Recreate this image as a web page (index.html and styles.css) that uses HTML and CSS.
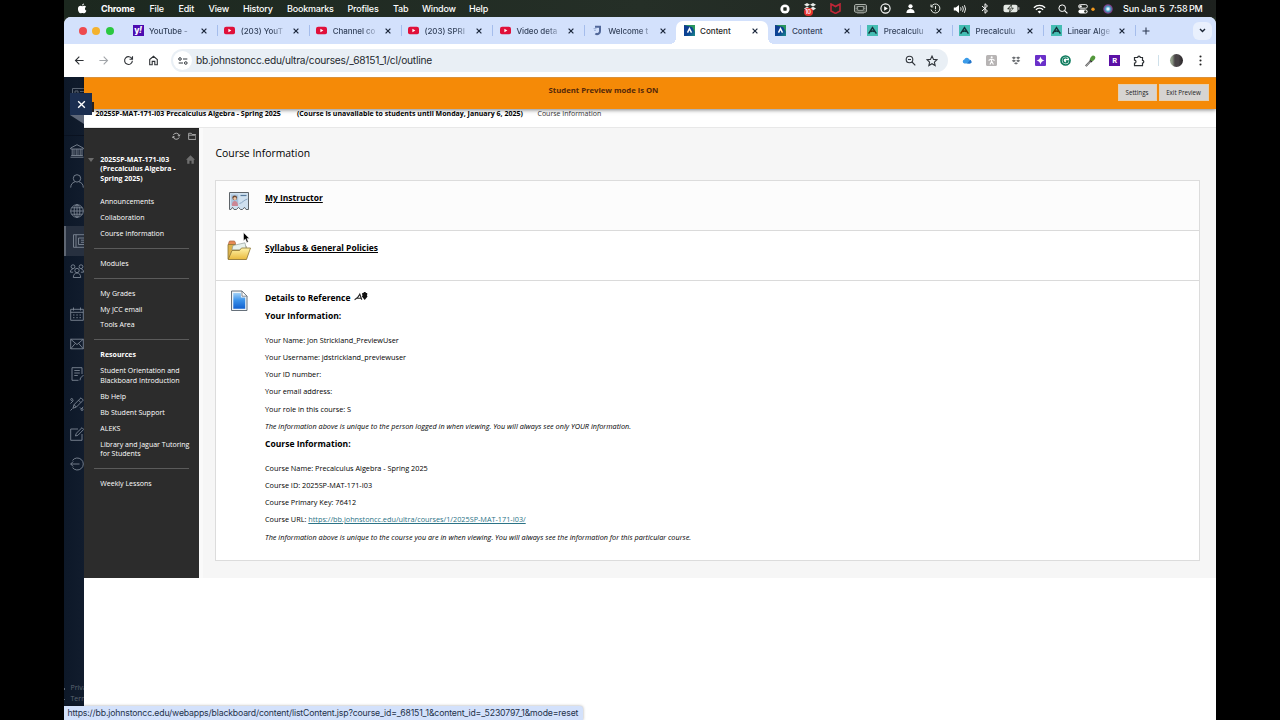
FILE: index.html
```
<!DOCTYPE html>
<html lang="en">
<head>
  <meta charset="UTF-8">
  <meta name="viewport" content="width=device-width, initial-scale=1.0">
  <title>Content</title>
  <link rel="stylesheet" href="styles.css">
</head>
<body>

<!-- shared icons -->
<svg class="sprite" aria-hidden="true">
  <defs>
    <linearGradient id="bbGrad" x1="0" y1="0" x2="1" y2="1">
      <stop offset="0" stop-color="#10398f"/><stop offset=".6" stop-color="#0b4595"/><stop offset="1" stop-color="#1d8f86"/>
    </linearGradient>
    <linearGradient id="folderGrad" x1="0" y1="0" x2="0" y2="1">
      <stop offset="0" stop-color="#fff3a8"/><stop offset="1" stop-color="#e9b93c"/>
    </linearGradient>
    <linearGradient id="docGrad" x1="0" y1="0" x2="0" y2="1">
      <stop offset="0" stop-color="#9fd0f7"/><stop offset=".45" stop-color="#3c93ea"/><stop offset="1" stop-color="#1160cf"/>
    </linearGradient>
    <symbol id="yt" viewBox="0 0 12 12"><rect y="1.8" width="12" height="8.4" rx="2.4" fill="#e0103a"/><path d="M4.8 4.2v3.6L8 6z" fill="#fff"/></symbol>
    <symbol id="bb" viewBox="0 0 11 11"><rect width="11" height="11" fill="url(#bbGrad)"/><path d="M0 0h11v7L8 2z" fill="#35b34a" opacity=".75"/><path d="M3.5 7.600L5.500 3.600l2 4" fill="none" stroke="#fff" stroke-width="1.400"/></symbol>
    <symbol id="aleks" viewBox="0 0 11 11"><rect width="11" height="11" fill="#45bdb3"/><path d="M1.600 8.600L5.500 2.600l3.900 6M3.400 6.800c1.200-.9 3-.9 4.200 0" fill="none" stroke="#12343b" stroke-width="1.400"/></symbol>
    <symbol id="x" viewBox="0 0 8 8"><path d="M1.600 1.600l4.800 4.800M6.400 1.600L1.600 6.400" fill="none" stroke="currentColor" stroke-width="1.250"/></symbol>
  </defs>
</svg>

<div class="screen">

  <div class="menubar">
    <svg class="apple" viewBox="0 0 12 14"><path d="M8.500.6c.1 1.300-1.100 2.600-2.400 2.600C5.900 1.900 7.200.8 8.500.6zM6.200 4c.6 0 1.300-.6 2.500-.6 1 0 1.900.5 2.500 1.300-2.200 1.300-1.800 4.400.4 5.200-.5 1.300-1.700 3.300-2.900 3.300-.9 0-1.200-.5-2.300-.5s-1.500.5-2.300.5C2.600 13.200.8 10.200.8 7.600c0-2.600 1.700-4.100 3.300-4.100 1 0 1.600.5 2.100.5z" fill="#fff"/></svg>
    <b class="m-app">Chrome</b>
    <span class="m-file">File</span>
    <span class="m-edit">Edit</span>
    <span class="m-view">View</span>
    <span class="m-history">History</span>
    <span class="m-book">Bookmarks</span>
    <span class="m-prof">Profiles</span>
    <span class="m-tab">Tab</span>
    <span class="m-win">Window</span>
    <span>Help</span>
    <div class="status">
      <i><svg width="10" height="10" viewBox="0 0 10 10"><circle cx="5" cy="5" r="4.600" fill="#fff"/><rect x="3.300" y="3.300" width="3.400" height="3.400" rx=".6" fill="#20281f"/></svg></i>
      <i class="dbx"><svg width="14" height="12" viewBox="0 0 14 12"><path d="M4 0l3 1.800L4 3.600 1 1.800zM10 0l3 1.800-3 1.800-3-1.800zM4 3.800l3 1.800-3 1.800-3-1.800zM10 3.800l3 1.800-3 1.800-3-1.800zM7 7.600l3 1.500L7 10.600 4 9.100z" fill="#e8ebe8"/></svg><em>10</em></i>
      <i><svg width="11" height="11" viewBox="0 0 11 11"><path d="M1 1l4.500 2.500L10 1v7L5.500 10.400 1 8z" fill="none" stroke="#c02637" stroke-width="1.600"/></svg></i>
      <i><svg width="13" height="10" viewBox="0 0 13 10"><rect x=".6" y=".6" width="11.800" height="7.600" rx="1.200" fill="none" stroke="#b9beb9" stroke-width="1"/><path d="M2.200 2.500v4M10.800 2.500v4" stroke="#b9beb9" stroke-dasharray="1 .6"/><rect x="3.700" y="2.500" width="5.600" height="3.800" fill="none" stroke="#b9beb9" stroke-width=".8"/><path d="M3 9.600h7" stroke="#777" stroke-width=".7"/></svg></i>
      <i><svg width="11" height="11" viewBox="0 0 11 11"><circle cx="5.500" cy="5.500" r="4.600" fill="none" stroke="#fff" stroke-width="1.100"/><path d="M4.200 3.300v4.400l3.600-2.200z" fill="#fff"/></svg></i>
      <i><svg width="9" height="9" viewBox="0 0 9 9"><circle cx="4.500" cy="2.300" r="2.100" fill="#fff"/><path d="M.4 9c0-2.600 1.600-4 4.100-4s4.100 1.400 4.100 4z" fill="#fff"/></svg></i>
      <i><svg width="11" height="11" viewBox="0 0 11 11"><path d="M1.300 3.600A4.500 4.500 0 1 1 1 6.500M1 1.500v2.400h2.400M5.500 3v3.200M5.500 7.200v1" fill="none" stroke="#e4e8e4" stroke-width="1"/></svg></i>
      <i><svg width="14" height="10" viewBox="0 0 14 10"><path d="M.8 3.400h2L6 .9v8.200L2.800 6.600h-2z" fill="#fff"/><path d="M7.600 3.300q1 1.700 0 3.400M9.500 2.200q1.700 2.800 0 5.600M11.400 1.200q2.300 3.800 0 7.600" fill="none" stroke="#fff" stroke-width=".9"/></svg></i>
      <i><svg width="8" height="11" viewBox="0 0 8 11"><path d="M1 3l5.500 5L4 10.300V.7L6.500 3 1 8" fill="none" stroke="#fff" stroke-width="1"/></svg></i>
      <i class="w28"><svg width="17" height="9" viewBox="0 0 17 9"><rect x=".5" y=".8" width="14" height="7.400" rx="2" fill="#e4e8e4"/><rect x="15.200" y="3.200" width="1.200" height="2.600" fill="#aaa"/><path d="M8.700.4L4.600 5h2.600l-.9 3.600L10.400 4H7.800z" fill="#20281f" stroke="#20281f" stroke-width=".6"/><path d="M8.200 1.800L5.800 4.500h2l-.6 2.700 2.400-2.700h-2z" fill="#fff"/></svg></i>
      <i class="w27"><svg width="13" height="10" viewBox="0 0 13 10"><path d="M.9 3.700a8 8 0 0 1 11.200 0M2.900 5.700a5.200 5.200 0 0 1 7.200 0" fill="none" stroke="#fff" stroke-width="1.400"/><path d="M4.700 7.500a2.600 2.600 0 0 1 3.600 0L6.500 9.400z" fill="#fff"/></svg></i>
      <i class="w21"><svg width="10" height="10" viewBox="0 0 10 10"><circle cx="4.200" cy="4.200" r="3.300" fill="none" stroke="#fff" stroke-width="1"/><path d="M6.600 6.600l2.800 2.800" stroke="#fff" stroke-width="1.100"/></svg></i>
      <i class="w26"><svg width="18" height="10" viewBox="0 0 18 10"><rect x=".6" y=".6" width="8.800" height="3.600" rx="1.800" fill="none" stroke="#fff" stroke-width=".9"/><circle cx="2.600" cy="2.400" r="1.200" fill="#fff"/><rect x=".4" y="5.400" width="9.200" height="4.200" rx="2.100" fill="#fff"/><circle cx="7.400" cy="7.500" r="1.200" fill="#20281f"/><circle cx="15" cy="5.200" r="1.700" fill="#f39a1e"/></svg></i>
      <i class="siri"></i>
      <span class="clock">Sun Jan 5&nbsp; 7:58&thinsp;PM</span>
    </div>
  </div>

  <div class="browser">
    <div class="tabs">
      <div class="lights"><i class="r"></i><i class="y"></i><i class="g"></i></div>
      <div class="tab"><span class="yahoo">y<em>!</em></span><span class="label fade">YouTube -</span><svg class="close"><use href="#x"/></svg></div>
      <div class="tab"><svg class="fav"><use href="#yt"/></svg><span class="label fade">(203) YouT</span><svg class="close"><use href="#x"/></svg></div>
      <div class="tab"><svg class="fav"><use href="#yt"/></svg><span class="label fade">Channel co</span><svg class="close"><use href="#x"/></svg></div>
      <div class="tab"><svg class="fav"><use href="#yt"/></svg><span class="label fade">(203) SPRI</span><svg class="close"><use href="#x"/></svg></div>
      <div class="tab"><svg class="fav"><use href="#yt"/></svg><span class="label fade">Video deta</span><svg class="close"><use href="#x"/></svg></div>
      <div class="tab plain"><svg class="fav" viewBox="0 0 11 11"><path d="M3 1.800h5v4.200a2.800 2.800 0 0 1-4.600 2.400" fill="none" stroke="#52689a" stroke-width="2"/><path d="M1.500 3.600h3M2 5.300h2" stroke="#9cb0d8" stroke-width="1"/></svg><span class="label fade">Welcome t</span><svg class="close"><use href="#x"/></svg></div>
      <div class="tab active"><svg class="fav"><use href="#bb"/></svg><span class="label">Content</span><svg class="close"><use href="#x"/></svg></div>
      <div class="tab"><svg class="fav"><use href="#bb"/></svg><span class="label">Content</span><svg class="close"><use href="#x"/></svg></div>
      <div class="tab"><svg class="fav"><use href="#aleks"/></svg><span class="label fade">Precalculu</span><svg class="close"><use href="#x"/></svg></div>
      <div class="tab"><svg class="fav"><use href="#aleks"/></svg><span class="label fade">Precalculu</span><svg class="close"><use href="#x"/></svg></div>
      <div class="tab"><svg class="fav"><use href="#aleks"/></svg><span class="label fade">Linear Alge</span><svg class="close"><use href="#x"/></svg></div>
      <svg class="plus" viewBox="0 0 8 8"><path d="M4 .5v7M.5 4h7" stroke="#2c3950" stroke-width="1.100"/></svg>
      <div class="tabsearch"><svg width="7" height="5" viewBox="0 0 7 5"><path d="M1 1l2.500 2.500L6 1" fill="none" stroke="#1c2636" stroke-width="1.400"/></svg></div>
    </div>

    <div class="toolbar">
      <div class="nav">
        <svg viewBox="0 0 11 11"><path d="M9.600 5.500H1.700M5.300 1.700L1.500 5.500l3.800 3.800" fill="none" stroke="#2f3236" stroke-width="1.100"/></svg>
        <svg viewBox="0 0 11 11"><path d="M1.400 5.500h7.900M5.700 1.700l3.800 3.800-3.800 3.800" fill="none" stroke="#a3a6aa" stroke-width="1.100"/></svg>
        <svg viewBox="0 0 11 11"><path d="M9 3.800A3.900 3.900 0 1 0 9.400 5.800M9.500 1.200v3H6.500" fill="none" stroke="#2f3236" stroke-width="1.100"/></svg>
        <svg viewBox="0 0 11 11"><path d="M1.700 4.500L5.500 1.300l3.800 3.200v5.200H6.800V6.400H4.200v3.300H1.700z" fill="none" stroke="#2f3236" stroke-width="1.100"/></svg>
      </div>
      <div class="omnibox">
        <div class="tune"><svg width="10" height="8" viewBox="0 0 10 8"><circle cx="2" cy="2" r="1.300" fill="none" stroke="#33383e"/><path d="M5 2h4.300M.7 6H5" stroke="#33383e" stroke-width="1.100"/><circle cx="7.800" cy="6" r="1.300" fill="none" stroke="#33383e"/></svg></div>
        <span class="url">bb.johnstoncc.edu/ultra/courses/_68151_1/cl/outline</span>
        <svg class="zoomicon" viewBox="0 0 11 11"><circle cx="4.500" cy="4.500" r="3.300" fill="none" stroke="#30353b" stroke-width="1.100"/><path d="M7 7l3.300 3.300M3 4.500h3" stroke="#30353b" stroke-width="1.200"/></svg>
        <svg class="star" viewBox="0 0 11 11"><path d="M5.500 1l1.400 3 3.200.3-2.400 2.200.7 3.200-2.900-1.700-2.900 1.700.7-3.200L.9 4.300 4.100 4z" fill="none" stroke="#30353b" stroke-width="1"/></svg>
      </div>
      <div class="exts">
        <i><svg width="10" height="7" viewBox="0 0 10 7"><path d="M2.300 6.500a2 2 0 0 1 0-3.900 2.700 2.700 0 0 1 5-.2 2.100 2.100 0 0 1 .5 4.100z" fill="#3b9be8"/><path d="M5 6.500L8.300 3q1.500 1 1.200 2.200-.4 1.300-1.700 1.300z" fill="#2373c8"/></svg></i>
        <i><svg width="11" height="11" viewBox="0 0 11 11"><rect width="11" height="11" rx="1.500" fill="#b7b4b4"/><circle cx="5.700" cy="2.300" r="1" fill="#fff"/><path d="M2.600 5.500l2-1.200h2l2 1.200M5.500 4.300v2.200L3.900 9.500M5.900 6.500l1.500 3" fill="none" stroke="#fff" stroke-width="1.100"/></svg></i>
        <i><svg width="10" height="9" viewBox="0 0 14 11"><path d="M4 0l3 1.800L4 3.600 1 1.800zM10 0l3 1.800-3 1.800-3-1.800zM4 4.200l3 1.800-3 1.800L1 6zM10 4.200L13 6l-3 1.800L7 6zM7 8l3 1.500L7 11 4 9.500z" fill="#6b6e72"/></svg></i>
        <i><svg width="11" height="11" viewBox="0 0 11 11"><rect width="11" height="11" rx="1" fill="#6a30c9"/><path d="M5.500 1.500q.7 3.300 4 4-3.300.7-4 4-.7-3.300-4-4 3.300-.7 4-4z" fill="#fff"/></svg></i>
        <i><svg width="11" height="11" viewBox="0 0 11 11"><circle cx="5.500" cy="5.500" r="4.500" fill="#fff" stroke="#0b7a5c" stroke-width="1.700"/><path d="M7.400 3.700a2.500 2.500 0 1 0 .6 2.300H5.900" fill="none" stroke="#0b7a5c" stroke-width="1.400"/></svg></i>
        <i><svg width="11" height="12" viewBox="0 0 11 12"><path d="M.8 11.200L5.700 5.800" stroke="#555" stroke-width="2"/><path d="M1.200 10.800L5 6.500" stroke="#ddd" stroke-width=".7"/><path d="M5 4.500l2 2.400" stroke="#333" stroke-width="1.500"/><ellipse cx="7.700" cy="3.300" rx="2.200" ry="2.900" transform="rotate(40 7.700 3.300)" fill="#54983c"/></svg></i>
        <i><span class="rbox">R</span></i>
        <i><svg width="12" height="12" viewBox="0 0 12 12"><path d="M1.500 2.500h3.200a1.300 1.300 0 0 1 2.600 0h2.200v2.900a1.300 1.300 0 0 1 0 2.600v2.600h-8V8.200a1.500 1.500 0 0 0 0-3z" fill="none" stroke="#2c3034" stroke-width="1.200"/></svg></i>
        <b class="sep"></b>
        <b class="avatar"></b>
        <svg class="dots" viewBox="0 0 3 11"><circle cx="1.500" cy="1.500" r="1.050"/><circle cx="1.500" cy="5.500" r="1.050"/><circle cx="1.500" cy="9.500" r="1.050"/></svg>
      </div>
    </div>
  </div>

  <div class="viewport">
    <div class="rail">
      <div class="rail-top"><svg viewBox="0 0 14 12"><path d="M.5 11.500V1.500h13v10M3 4h3v3H3zM8 4.500h4M8 6.500h4" fill="none" stroke="#5a6472"/></svg></div>
      <div class="rail-group">
        <i><svg viewBox="0 0 14 14"><path d="M7 .7L13.300 4v1H.7V4zM.5 13.200h13M1.200 11.500h11.600M2.200 5v6.500M4 5v6.500M6.200 5v6.500M8 5v6.500M10.200 5v6.500M12 5v6.500"/></svg></i>
        <i><svg viewBox="0 0 14 14"><circle cx="7" cy="4.400" r="3.700"/><path d="M.7 13.600c.2-3.500 1.700-5 4-5.500M13.300 13.600c-.2-3.500-1.700-5-4-5.500"/></svg></i>
        <i><svg viewBox="0 0 14 14"><circle cx="7" cy="7" r="6.300"/><ellipse cx="7" cy="7" rx="2.900" ry="6.300"/><path d="M7 .7v12.600M.7 7h12.600M1.600 3.800h10.800M1.600 10.200h10.800"/></svg></i>
        <i class="on"><svg viewBox="0 0 14 14"><path d="M1.500.7H14M1.500.7v12.600H14M4 .7v12.600M6.500 4H14M6.500 4v6.500H14M9 6.200h5M9 8.300h5"/></svg></i>
        <i><svg viewBox="0 0 14 14"><circle cx="3" cy="2.700" r="1.900"/><circle cx="11" cy="2.700" r="1.900"/><circle cx="7" cy="6.500" r="2.200"/><path d="M.5 8.200c0-2 .8-3 2.500-3.400M13.500 8.200c0-2-.8-3-2.500-3.400M3.300 13.500c.1-2.800 1.400-4.500 3.700-4.500s3.600 1.700 3.700 4.500zM.5 8.200h2.700M10.800 8.200h2.700"/></svg></i>
      </div>
      <div class="rail-group second">
        <i><svg viewBox="0 0 14 14"><path d="M.7 2.300h12.600v11H.7zM.7 5.300h12.600M3.500.5v3M10.500.5v3M3 8h1.500M6.300 8h1.500M9.500 8H11M3 10.700h1.500M6.300 10.700h1.500M9.500 10.700H11"/></svg></i>
        <i><svg viewBox="0 0 14 14"><path d="M.7 2.200h12.600v9.600H.7zM.7 2.200L7 7.600l6.300-5.400M.7 11.800l4.700-5.500M13.300 11.800L8.600 6.300"/></svg></i>
        <i><svg viewBox="0 0 14 14"><path d="M12 7V.7H2v12.600h6.500M4.300 3.500h5.500M4.300 6h5.500M4.300 8.500h3.500M10 13.300l.5-2.300 3-3"/></svg></i>
        <i><svg viewBox="0 0 14 14"><path d="M3 11.200l1-3.500L11 .8l2.300 2.300-7 7zM4 7.700l2.300 2.400M8.500 3.200l2.400 2.400M10 10.500l1.300 1.300 2-2"/><circle cx="1.700" cy="2.500" r="1"/><circle cx="12" cy="12.500" r="1"/><path d="M.5 6.500L3.500 3.500M.5 13.500l2-2"/></svg></i>
        <i><svg viewBox="0 0 14 14"><path d="M8 2H.7v11.300H12V7M5.500 9l.6-2.500L12 .7l1.700 1.700L7.900 8.300z"/></svg></i>
        <i><svg viewBox="0 0 14 14"><path d="M2.500 3.400a6 6 0 1 1 0 7.200M9.500 7H.7M3.200 4.500L.7 7l2.500 2.500"/></svg></i>
      </div>
      <ul class="rail-foot"><li>Priva</li><li>Term</li></ul>
    </div>

    <div class="page">
      <div class="preview">
        <p>Student Preview mode is ON</p>
        <div class="preview-actions"><button>Settings</button><button>Exit Preview</button></div>
      </div>
      <div class="crumbs">
        <b class="c-course">2025SP-MAT-171-I03 Precalculus Algebra - Spring 2025</b>
        <b class="c-note">(Course is unavailable to students until Monday, January 6, 2025)</b>
        <span>Course Information</span>
      </div>

      <div class="course">
        <div class="menu">
          <div class="menu-tools">
            <svg viewBox="0 0 8 8"><path d="M1.200 2.900A3 3 0 0 1 6.900 3.600M6.800 5.100A3 3 0 0 1 1.100 4.400M7.500 2.400L6.900 3.900 5.400 3.300M.5 5.600l.6-1.500 1.500.6" fill="none" stroke="#b5b5b5" stroke-width=".9"/></svg>
            <svg viewBox="0 0 8 8"><path d="M.6 7V1.200h2.500l.8 1.200h3.500V7zM.6 3h6" fill="none" stroke="#a9a9a9" stroke-width=".9"/></svg>
          </div>
          <div class="menu-title">
            <svg class="caret" viewBox="0 0 6 4"><path d="M0 0h6L3 4z" fill="#6d6d6d"/></svg>
            <h3>2025SP-MAT-171-I03 (Precalculus Algebra - Spring 2025)</h3>
            <svg class="home" viewBox="0 0 9 9"><path d="M4.500.3L9 4.700H7.800v4H5.500v-3h-2v3H1.200v-4H0z" fill="#6f6f6f"/></svg>
          </div>
          <ul>
            <li>Announcements</li>
            <li>Collaboration</li>
            <li>Course Information</li>
            <li class="line"></li>
            <li>Modules</li>
            <li class="line"></li>
            <li>My Grades</li>
            <li>My JCC email</li>
            <li>Tools Area</li>
            <li class="line"></li>
            <li><b>Resources</b></li>
            <li>Student Orientation and Blackboard Introduction</li>
            <li>Bb Help</li>
            <li>Bb Student Support</li>
            <li>ALEKS</li>
            <li>Library and Jaguar Tutoring for Students</li>
            <li class="line"></li>
            <li>Weekly Lessons</li>
          </ul>
        </div>

        <div class="content">
          <h1>Course Information</h1>
          <div class="items">
            <div class="item">
              <svg class="item-icon" viewBox="0 0 24 24"><path d="M2.500 3.500h19v17h-2.500l-1.500-2.200-2 2.200h-2l-2-2.200-2 2.200H7l-1.500-2.200L4 20.500H2.500z" fill="#cfe0ef" stroke="#5e6469" stroke-width="1"/><rect x="4.200" y="5.500" width="7" height="10.500" fill="#a9c3dc"/><circle cx="7.700" cy="8.800" r="2.400" fill="#6b4a35"/><circle cx="7.900" cy="9.500" r="1.500" fill="#efc5a5"/><path d="M4.800 17c0-3.500 1.200-5 3-5s3.200 1.500 3.200 5z" fill="#cc8795"/><path d="M13.500 6.500h6" stroke="#56789b" stroke-width="1.200"/><path d="M12.500 14.500c3-.5 4-3.500 8-4.500" stroke="#8aa6c3" fill="none"/></svg>
              <h2><a>My Instructor</a></h2>
            </div>
            <div class="item">
              <svg class="item-icon" viewBox="0 0 24 24"><path d="M1.500 4.500l1-2.500h5l1 2V8h-7z" fill="#e78a56" stroke="#a96846" stroke-width=".7"/><path d="M1 20V5.500h7L9.500 7H19v13z" fill="#dcb34c" stroke="#8c7434" stroke-width=".8"/><path d="M6 6.500l12-2.700 1.500 7H5z" fill="#e8f2ee" stroke="#84918d" stroke-width=".6"/><path d="M1.200 20.500L5 11.500h7.500l2-2.500H23.500l-4 11.500z" fill="url(#folderGrad)" stroke="#8c7434" stroke-width=".8"/></svg>
              <h2><a>Syllabus &amp; General Policies</a></h2>
            </div>
            <div class="item">
              <svg class="item-icon" viewBox="0 0 24 24"><path d="M4.500 2h10.500L20 7.200V21.500H4.500z" fill="#eef4f8" stroke="#66707a" stroke-width="1"/><path d="M6.300 4h7.600v4.500h4.300v11.200H6.300z" fill="url(#docGrad)"/><path d="M15 2v5.200h5z" fill="#fff" stroke="#66707a" stroke-width=".8"/></svg>
              <div class="details">
                <h2>Details to Reference <svg class="ally" viewBox="0 0 14 9"><path d="M.6 7.800Q4 6 5.800 2.200L7.800 7.800M3.200 6.200h4" fill="none" stroke="#222" stroke-width="1.100"/><path d="M9.700 0h2v1h1.500v2h-.4l.7 1.500L10.700 8 7.900 4.500 8.600 3h-.4V1h1.500z" fill="#111"/></svg></h2>
                <h4>Your Information:</h4>
                <p>Your Name: Jon Strickland_PreviewUser</p>
                <p>Your Username: jdstrickland_previewuser</p>
                <p>Your ID number:</p>
                <p>Your email address:</p>
                <p>Your role in this course: S</p>
                <p><em>The information above is unique to the person logged in when viewing. You will always see only YOUR information.</em></p>
                <h4>Course Information:</h4>
                <p>Course Name: Precalculus Algebra - Spring 2025</p>
                <p>Course ID: 2025SP-MAT-171-I03</p>
                <p>Course Primary Key: 76412</p>
                <p>Course URL: <a>https://bb.johnstoncc.edu/ultra/courses/1/2025SP-MAT-171-I03/</a></p>
                <p><em>The information above is unique to the course you are in when viewing. You will always see the information for this particular course.</em></p>
              </div>
            </div>
          </div>
        </div>
      </div>
    </div>

    <div class="ribbon"></div>
    <button class="panel-close" aria-label="Close"><svg viewBox="0 0 10 10"><path d="M1.300 1.300l7.400 7.400M8.700 1.300L1.300 8.700" stroke="#fff" stroke-width="1.500"/></svg></button>
    <div class="linkstatus">https://bb.johnstoncc.edu/webapps/blackboard/content/listContent.jsp?course_id=_68151_1&amp;content_id=_5230797_1&amp;mode=reset</div>
    <svg class="cursor" viewBox="0 0 7 11"><path d="M.5.5v8.300l1.900-1.700 1.400 3.300 1.500-.7-1.400-3.100h2.500z" fill="#000" stroke="#fff" stroke-width=".5"/></svg>
  </div>
</div>
</body>
</html>
```
FILE: styles.css
```
* {
  box-sizing: border-box;
  margin: 0;
  padding: 0;
}

body {
  width: 1280px;
  height: 720px;
  overflow: hidden;
  background: #000;
  font-family: "Open Sans", "Noto Sans", sans-serif;
  color: #000;
}

i { font-style: normal; }
ul { list-style: none; }

.sprite {
  position: absolute;
  width: 0;
  height: 0;
}

.screen {
  width: 1152px;
  height: 720px;
  margin: 0 auto;
  display: flex;
  flex-direction: column;
  background: #222b23;
}

/* macOS menu bar */
.menubar {
  height: 17px;
  flex: none;
  display: flex;
  align-items: center;
  padding-left: 13px;
  background: linear-gradient(90deg, #1c281f, #252f27 50%, #1d211e);
  color: #fff;
  font: 500 9px/16px "Inter", sans-serif;
  letter-spacing: -.2px;
  white-space: nowrap;
}
.apple { width: 10px; height: 11px; margin-right: 14px; flex: none; }
.m-app { width: 48.5px; font-weight: 700; }
.m-file { width: 29px; }
.m-edit { width: 30px; }
.m-view { width: 34.5px; }
.m-history { width: 44px; }
.m-book { width: 60.5px; }
.m-prof { width: 45.5px; }
.m-tab { width: 29px; }
.m-win { width: 47px; }
.status {
  display: flex;
  align-items: center;
  margin-left: auto;
  padding-right: 12.5px;
}
.status i {
  width: 25px;
  height: 16px;
  display: flex;
  align-items: center;
  justify-content: center;
  position: relative;
}
.status .w28 { width: 28px; }
.status .w27 { width: 27px; }
.status .w21 { width: 21px; }
.status .w26 { width: 26px; }
.dbx em {
  position: absolute;
  left: 6px;
  top: 7px;
  width: 9px;
  height: 8px;
  border-radius: 4px;
  background: #e5322d;
  font: 600 5.5px/8px "Inter", sans-serif;
  text-align: center;
}
.status .siri {
  width: 10px;
  height: 10px;
  margin: 0 3px;
  border-radius: 50%;
  background: radial-gradient(circle, #e6f4ff 0 12%, #4aa5c9 35%, #7a3d83 60%, #2a2733 75%);
}
.clock { width: 80.5px; margin-left: 7.5px; letter-spacing: -.12px; }

/* browser chrome */
.browser {
  flex: none;
  height: 60px;
  border-radius: 7px 7px 0 0;
  overflow: hidden;
  background: #fff;
  font-family: "Inter", sans-serif;
}
.tabs {
  height: 27px;
  display: flex;
  align-items: center;
  background: #d3e1fc;
  color: #35435c;
}
.lights {
  width: 61px;
  flex: none;
  display: flex;
  gap: 5.8px;
  padding-left: 14.5px;
}
.lights i { width: 8px; height: 8px; border-radius: 50%; }
.lights .r { background: #ee4a4e; }
.lights .y { background: #f4b22e; }
.lights .g { background: #2bc840; }
.tab {
  width: 91.85px;
  height: 27px;
  flex: none;
  display: flex;
  align-items: center;
  padding: 0 9px 0 7.5px;
  position: relative;
}
.tab:not(.plain):not(.active)::after {
  content: "";
  position: absolute;
  right: -1px;
  top: 8px;
  width: 1px;
  height: 11px;
  background: #a5bdec;
}
.fav { width: 11px; height: 11px; flex: none; margin-right: 5.5px; }
.yahoo {
  width: 11px;
  height: 11px;
  flex: none;
  margin-right: 5.5px;
  background: #4c0bb0;
  color: #fff;
  font: 800 8.5px/10px "Inter", sans-serif;
  text-align: center;
  letter-spacing: -.5px;
}
.label {
  width: 46px;
  flex: none;
  white-space: nowrap;
  font-size: 8.1px;
  font-weight: 500;
  line-height: 12px;
  letter-spacing: -.02px;
}
.fade {
  font-size: 8px;
  letter-spacing: -.05px;
  -webkit-mask-image: linear-gradient(90deg, #000 66%, rgba(0, 0, 0, .15) 95%);
  mask-image: linear-gradient(90deg, #000 66%, rgba(0, 0, 0, .15) 95%);
}
.close { width: 8px; height: 8px; margin-left: auto; color: #1f2b3f; }
.tab.active {
  background: #fff;
  border-radius: 7px 7px 0 0;
  height: 23px;
  align-self: flex-end;
  padding-bottom: 4px;
  color: #1f1f1f;
}
/* flared feet of the active tab */
.tab.active::before,
.tab.active::after {
  content: "";
  position: absolute;
  bottom: 0;
  width: 6px;
  height: 6px;
}
.tab.active::before { left: -6px; background: radial-gradient(circle at 0 0, transparent 5.8px, #fff 6px); }
.tab.active::after { right: -6px; background: radial-gradient(circle at 100% 0, transparent 5.8px, #fff 6px); }
.plus { width: 8px; height: 8px; margin-left: 6.5px; }
.tabsearch {
  width: 19px;
  height: 18px;
  margin: 0 4px 0 auto;
  border-radius: 6px;
  background: #e9f0fd;
  display: flex;
  align-items: center;
  justify-content: center;
}
.toolbar {
  height: 33px;
  display: flex;
  align-items: center;
}
.nav {
  width: 107px;
  flex: none;
  display: flex;
  gap: 13.7px;
  padding-left: 9.5px;
}
.nav svg { width: 11px; height: 11px; }
.omnibox {
  width: 777px;
  height: 23px;
  flex: none;
  display: flex;
  align-items: center;
  border-radius: 12px;
  background: #e9eff5;
  padding: 0 10px 0 2px;
}
.tune {
  width: 19px;
  height: 19px;
  border-radius: 50%;
  background: #fff;
  display: flex;
  align-items: center;
  justify-content: center;
}
.url {
  margin-left: 4px;
  padding-bottom: 1px;
  font-size: 10.2px;
  letter-spacing: -.22px;
  color: #24282d;
}
.zoomicon { width: 11px; height: 11px; margin-left: auto; }
.star { width: 12px; height: 12px; margin-left: 10.5px; }
.exts {
  flex: 1;
  display: flex;
  align-items: center;
  padding-left: 6.5px;
}
.exts i {
  width: 24.65px;
  display: flex;
  justify-content: center;
}
.rbox {
  width: 11px;
  height: 11px;
  background: #5b10a5;
  color: #fff;
  font: 700 8px/11px "Liberation Mono", monospace;
  text-align: center;
}
.sep { width: 1px; height: 11px; margin-left: 6px; background: #cfe0ea; }
.avatar {
  width: 13px;
  height: 13px;
  margin-left: 11px;
  border-radius: 50%;
  background: linear-gradient(90deg, #93a08b 0 15%, #4a4548 38% 65%, #272426);
}
.dots { width: 3px; height: 11px; margin-left: 16.5px; fill: #222; }

/* page area */
.viewport {
  flex: 1;
  display: flex;
  min-height: 0;
  position: relative;
  background: #fff;
  overflow: hidden;
}
.rail {
  width: 20px;
  flex: none;
  display: flex;
  flex-direction: column;
  overflow: hidden;
  background: linear-gradient(90deg, #0d1828, #111c2d);
}
.rail-top {
  height: 59px;
  flex: none;
  padding: 10px 0 0 8px;
  border-bottom: 1px solid #0a1220;
}
.rail-top svg { display: block; width: 14px; height: 12px; }
.rail-group i {
  display: flex;
  align-items: center;
  height: 30px;
  padding-left: 6px;
}
.rail-group svg {
  width: 14px;
  height: 14px;
  flex: none;
  fill: none;
  stroke: #7d8794;
  stroke-width: .9;
}
.rail-group .on {
  background: #27303f;
  border-left: 2px solid #5e6672;
}
.second { margin-top: 13px; }
.rail-foot {
  margin-top: auto;
  padding: 0 0 16px 6.5px;
  font-size: 7px;
  line-height: 10.5px;
  color: #5d6672;
}
.rail-foot li { position: relative; }
.rail-foot li::before {
  content: "";
  position: absolute;
  left: -7px;
  top: 5px;
  width: 1.5px;
  height: 1.5px;
  background: #5d6672;
}

.page { flex: 1; min-width: 0; }
.preview {
  height: 32px;
  display: flex;
  justify-content: center;
  position: relative;
  background: #f58a07;
  border-top: 1px solid #d9913c;
  box-shadow: 0 1px 4px rgba(0, 0, 0, .5);
}
.preview p {
  margin: 5.5px 93px 0 0;
  font-size: 7.73px;
  line-height: 12px;
  font-weight: 700;
  color: #54280a;
}
.preview-actions {
  position: absolute;
  right: 7.5px;
  top: 6px;
  display: flex;
  gap: 2px;
}
.preview button {
  height: 17px;
  width: 39px;
  border: 1px solid #e6cfae;
  background: #d6d4d2;
  font: 6.2px/14px "Open Sans", sans-serif;
  color: #222;
}
.preview button + button { width: 50px; }
.crumbs {
  height: 19px;
  padding-left: 11.5px;
  display: flex;
  font-size: 7px;
  line-height: 10px;
  white-space: nowrap;
  border-bottom: 1px solid #e8e8e8;
}
.c-course { width: 201.5px; }
.c-note { width: 240.5px; }
.crumbs span { color: #333; }

.course {
  display: flex;
  height: 450px;
}
.menu {
  width: 115px;
  flex: none;
  background: #2c2c2c;
  border-top: 1px solid #222;
  color: #fff;
  font-size: 7.02px;
  line-height: 9.6px;
}
.menu-tools {
  display: flex;
  justify-content: flex-end;
  gap: 7px;
  padding: 2.5px 3px 0 0;
  height: 25.5px;
}
.menu-tools svg { width: 8.5px; height: 8.5px; }
.menu-title {
  display: flex;
  align-items: flex-start;
  height: 42.3px;
  padding: 0 4px 0 4px;
}
.menu-title h3 {
  width: 84px;
  font-size: 7px;
  line-height: 9.6px;
}
.caret { width: 6px; height: 4px; margin: 3px 6.3px 0 0; }
.home { width: 9px; height: 9px; margin-left: auto; }
.menu ul { padding: 0 6px 0 16.3px; }
.menu li { margin-bottom: 6.4px; }
.menu .line {
  height: 1px;
  margin: 9.4px 4px 9.9px -6px;
  background: #5b5b5b;
}

.content {
  flex: 1;
  background: #f6f6f6;
  border-left: 4px solid #fafafa;
  padding: 17.5px 16.5px 0 12px;
}
.content h1 {
  font-size: 10.4px;
  line-height: 15px;
  font-weight: 400;
  padding-left: .5px;
}
.items {
  margin-top: 19.5px;
  height: 381px;
  background: #fff;
  border: 1px solid #dcdcdc;
}
.item {
  display: flex;
  height: 50px;
  padding: 11px 0 0 11px;
  border-bottom: 1px solid #dadada;
}
.item:first-child { background: #fcfcfc; }
.item:last-child { height: auto; border: none; }
.item-icon {
  width: 24px;
  height: 24px;
  flex: none;
  margin: -3px 14px 0 0;
}
.item h2 {
  font-size: 8.48px;
  line-height: 12px;
}
.item h2 a { text-decoration: underline; text-decoration-thickness: 1px; }
.ally { width: 14px; height: 9px; margin-left: 1px; }
.details h4 {
  margin-top: 6px;
  font-size: 8.52px;
  line-height: 12px;
}
.details p + h4 { margin-top: 7px; }
.details h4 + p { margin-top: 12.5px; }
.details p {
  margin-top: 7px;
  font-size: 7.29px;
  line-height: 10.25px;
  white-space: nowrap;
}
.details p a { color: #2b7386; text-decoration: underline; }

/* overlays */
.ribbon {
  position: absolute;
  left: 6px;
  top: 38px;
  width: 14px;
  height: 9px;
  background: #5e6779;
  clip-path: polygon(0 0, 100% 0, 100% 100%);
}
.panel-close {
  position: absolute;
  left: 6px;
  top: 16px;
  width: 22px;
  height: 22px;
  border: 0;
  background: #1b2e50;
  display: flex;
  align-items: center;
  justify-content: center;
}
.panel-close::after {
  content: "";
  position: absolute;
  left: 22px;
  top: 9px;
  width: 2px;
  height: 10px;
  background: #29221f;
}
.panel-close svg { width: 9px; height: 9px; }
.linkstatus {
  position: absolute;
  left: 0;
  bottom: 0;
  width: 519px;
  height: 14px;
  padding-left: 3.5px;
  border-radius: 0 3px 0 0;
  background: #d3e1fb;
  box-shadow: 0 0 3px rgba(0, 0, 0, .35);
  font: 8.7px/14px "Inter", sans-serif;
  letter-spacing: -.15px;
  color: #24324a;
  white-space: nowrap;
}
.cursor {
  position: absolute;
  left: 179px;
  top: 155px;
  width: 7px;
  height: 11px;
}
```
